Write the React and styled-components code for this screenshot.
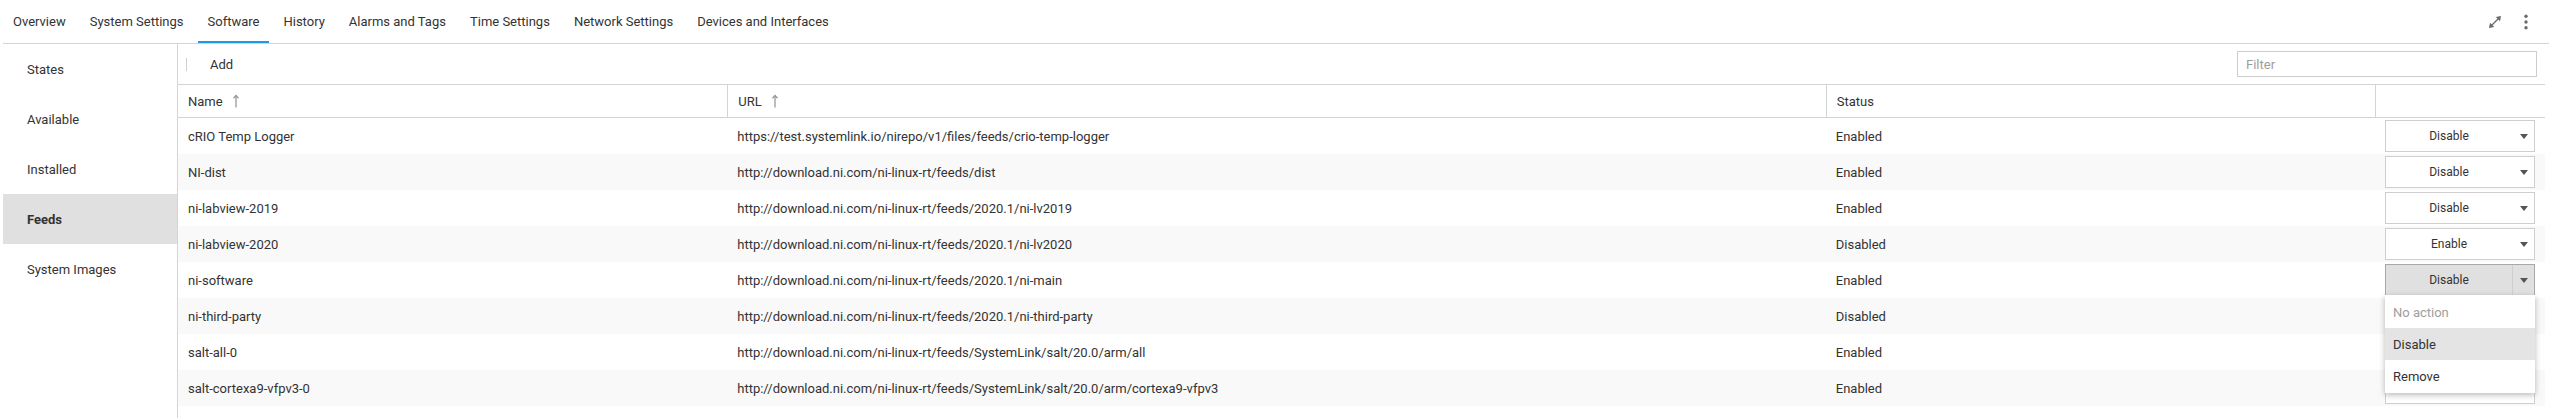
import React from 'react';
import styled, { createGlobalStyle } from 'styled-components';

const GlobalStyle = createGlobalStyle`
  html, body {
    margin: 0;
    padding: 0;
    overflow: hidden;
    background: #fff;
  }
  body {
    font-family: Roboto, "Noto Sans", "Liberation Sans", Arial, sans-serif;
    font-size: 13px;
    color: #333;
  }
  * { box-sizing: border-box; }
`;

const Page = styled.div`
  height: 100vh;
  overflow: hidden;
  display: flex;
  flex-direction: column;
  padding: 0 3px;
`;

const TabBar = styled.nav`
  display: flex;
  align-items: stretch;
  height: 44px;
  flex-shrink: 0;
  border-bottom: 1px solid #d4d4d4;
`;

const Tab = styled.div`
  display: flex;
  align-items: center;
  padding: 0 10px;
  margin-right: 4px;
  white-space: nowrap;
  cursor: pointer;
  color: #333;
  box-shadow: ${(p) => (p.$active ? 'inset 0 -2px 0 #1a9be6' : 'none')};
`;

const TabActions = styled.div`
  margin-left: auto;
  display: flex;
  align-items: center;
  gap: 7px;
  padding-right: 11px;
`;

const IconButton = styled.button`
  width: 24px;
  height: 24px;
  padding: 0;
  border: none;
  background: transparent;
  display: flex;
  align-items: center;
  justify-content: center;
  color: #666;
  cursor: pointer;
`;

const Body = styled.div`
  display: flex;
  flex: 1;
  min-height: 0;
`;

const SideNav = styled.aside`
  width: 175px;
  flex-shrink: 0;
  border-right: 1px solid #d4d4d4;
`;

const NavItem = styled.div`
  height: 50px;
  display: flex;
  align-items: center;
  padding-left: 24px;
  cursor: pointer;
  font-weight: ${(p) => (p.$active ? 700 : 400)};
  background: ${(p) => (p.$active ? '#e0e0e0' : 'transparent')};
  color: #333;
`;

const Main = styled.main`
  flex: 1;
  min-width: 0;
  display: flex;
  flex-direction: column;
  padding-right: 4px;
`;

const Toolbar = styled.div`
  height: 41px;
  flex-shrink: 0;
  display: flex;
  align-items: center;
  padding: 0 8px;
  border-bottom: 1px solid #d4d4d4;
`;

const ToolbarDivider = styled.span`
  width: 1px;
  height: 13px;
  background: #d0d0d0;
`;

const ToolbarButton = styled.button`
  margin-left: 23px;
  padding: 0;
  border: none;
  background: transparent;
  font: inherit;
  color: #333;
  cursor: pointer;
`;

const FilterInput = styled.input`
  margin-left: auto;
  width: 300px;
  height: 26px;
  border: 1px solid #ccc;
  padding: 0 8px;
  font: inherit;
  color: #333;
  outline: none;
  &::placeholder {
    color: #9e9e9e;
  }
`;

const columns = '1fr 2fr 1fr 170px';

const HeaderRow = styled.div`
  display: grid;
  grid-template-columns: ${columns};
  height: 33px;
  flex-shrink: 0;
  border-bottom: 1px solid #d4d4d4;
`;

const HeaderCell = styled.div`
  display: flex;
  align-items: center;
  gap: 9px;
  padding: 0 10px;
  border-left: ${(p) => (p.$first ? 'none' : '1px solid #d4d4d4')};
  color: #333;
`;

const Row = styled.div`
  display: grid;
  grid-template-columns: ${columns};
  height: 36px;
  flex-shrink: 0;
  background: ${(p) => (p.$striped ? '#f9f9f9' : '#fff')};
`;

const Cell = styled.div`
  display: flex;
  align-items: center;
  padding: 0 10px;
  white-space: nowrap;
  overflow: hidden;
`;

const ActionCell = styled.div`
  display: flex;
  align-items: center;
  justify-content: center;
  position: relative;
`;

const SelectBox = styled.div`
  position: relative;
  width: 150px;
  height: 32px;
  display: flex;
  align-items: stretch;
  border: 1px solid ${(p) => (p.$open ? '#a8a8a8' : '#cfcfcf')};
  background: ${(p) => (p.$open ? '#e0e0e0' : '#fff')};
  cursor: pointer;
`;

const SelectLabel = styled.span`
  flex: 1;
  display: flex;
  align-items: center;
  justify-content: center;
  font-size: 12px;
  color: #333;
`;

const SelectCaret = styled.span`
  width: 22px;
  display: flex;
  align-items: center;
  justify-content: center;
  border-left: 1px solid ${(p) => (p.$open ? '#cfcfcf' : 'transparent')};
  &::after {
    content: '';
    border-left: 4px solid transparent;
    border-right: 4px solid transparent;
    border-top: 5px solid #555;
  }
`;

const Menu = styled.ul`
  position: absolute;
  top: 100%;
  left: -1px;
  right: -1px;
  margin: 0;
  padding: 1px 0;
  list-style: none;
  background: #fff;
  box-shadow: 0 2px 6px rgba(0, 0, 0, 0.28);
  z-index: 10;
`;

const MenuItem = styled.li`
  height: 32px;
  display: flex;
  align-items: center;
  padding-left: 8px;
  font-size: 13px;
  color: ${(p) => (p.$muted ? '#9e9e9e' : '#333')};
  background: ${(p) => (p.$highlighted ? '#e4e4e4' : 'transparent')};
`;

const SortIcon = () => (
  <svg width="8" height="14" viewBox="0 0 8 14" fill="none" stroke="#9a9a9a" strokeWidth="1.3">
    <path d="M4 13.5V1.5" />
    <path d="M1.5 4.2L4 1.5L6.5 4.2" />
  </svg>
);

const ExpandIcon = () => (
  <svg width="14" height="14" viewBox="0 0 14 14">
    <path d="M3 11L11 3" stroke="#6b6b6b" strokeWidth="1.3" />
    <polygon points="13,1 7.8,2 12,6.2" fill="#6b6b6b" />
    <polygon points="1,13 2,7.8 6.2,12" fill="#6b6b6b" />
  </svg>
);

const KebabIcon = () => (
  <svg width="6" height="16" viewBox="0 0 6 16" fill="#6b6b6b">
    <circle cx="3" cy="2.2" r="1.7" />
    <circle cx="3" cy="8" r="1.7" />
    <circle cx="3" cy="13.8" r="1.7" />
  </svg>
);

const tabs = [
  'Overview',
  'System Settings',
  'Software',
  'History',
  'Alarms and Tags',
  'Time Settings',
  'Network Settings',
  'Devices and Interfaces',
];

const navItems = ['States', 'Available', 'Installed', 'Feeds', 'System Images'];

const base = 'http://download.ni.com/ni-linux-rt/feeds';

const feeds = [
  { name: 'cRIO Temp Logger', url: 'https://test.systemlink.io/nirepo/v1/files/feeds/crio-temp-logger', status: 'Enabled' },
  { name: 'NI-dist', url: `${base}/dist`, status: 'Enabled' },
  { name: 'ni-labview-2019', url: `${base}/2020.1/ni-lv2019`, status: 'Enabled' },
  { name: 'ni-labview-2020', url: `${base}/2020.1/ni-lv2020`, status: 'Disabled' },
  { name: 'ni-software', url: `${base}/2020.1/ni-main`, status: 'Enabled', open: true },
  { name: 'ni-third-party', url: `${base}/2020.1/ni-third-party`, status: 'Disabled' },
  { name: 'salt-all-0', url: `${base}/SystemLink/salt/20.0/arm/all`, status: 'Enabled' },
  { name: 'salt-cortexa9-vfpv3-0', url: `${base}/SystemLink/salt/20.0/arm/cortexa9-vfpv3`, status: 'Enabled' },
];

const ActionSelect = ({ value, open }) => (
  <SelectBox $open={open}>
    <SelectLabel>{value}</SelectLabel>
    <SelectCaret $open={open} />
    {open && (
      <Menu>
        <MenuItem $muted>No action</MenuItem>
        <MenuItem $highlighted>Disable</MenuItem>
        <MenuItem>Remove</MenuItem>
      </Menu>
    )}
  </SelectBox>
);

export default function App() {
  return (
    <>
      <GlobalStyle />
      <Page>
        <TabBar>
          {tabs.map((t) => (
            <Tab key={t} $active={t === 'Software'}>
              {t}
            </Tab>
          ))}
          <TabActions>
            <IconButton aria-label="Expand">
              <ExpandIcon />
            </IconButton>
            <IconButton aria-label="More">
              <KebabIcon />
            </IconButton>
          </TabActions>
        </TabBar>
        <Body>
          <SideNav>
            {navItems.map((n) => (
              <NavItem key={n} $active={n === 'Feeds'}>
                {n}
              </NavItem>
            ))}
          </SideNav>
          <Main>
            <Toolbar>
              <ToolbarDivider />
              <ToolbarButton>Add</ToolbarButton>
              <FilterInput placeholder="Filter" />
            </Toolbar>
            <HeaderRow>
              <HeaderCell $first>
                Name <SortIcon />
              </HeaderCell>
              <HeaderCell>
                URL <SortIcon />
              </HeaderCell>
              <HeaderCell>Status</HeaderCell>
              <HeaderCell />
            </HeaderRow>
            {feeds.map((f, i) => (
              <Row key={f.name} $striped={i % 2 === 1}>
                <Cell>{f.name}</Cell>
                <Cell>{f.url}</Cell>
                <Cell>{f.status}</Cell>
                <ActionCell>
                  <ActionSelect
                    value={f.status === 'Enabled' ? 'Disable' : 'Enable'}
                    open={f.open}
                  />
                </ActionCell>
              </Row>
            ))}
          </Main>
        </Body>
      </Page>
    </>
  );
}
